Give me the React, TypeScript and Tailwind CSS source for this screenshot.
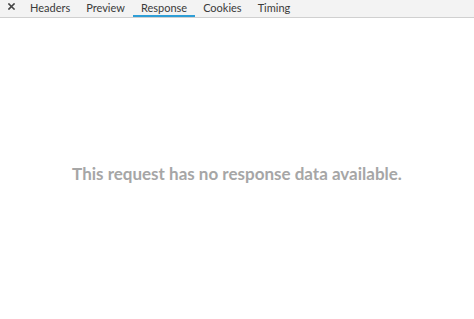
import React from "react";

const tabs = ["Headers", "Preview", "Response", "Cookies", "Timing"];

export default function App() {
  return (
    <div className="w-[474px] h-[319px] bg-white flex flex-col overflow-hidden" style={{ fontFamily: 'Lato, "Noto Sans", sans-serif' }}>
      <div className="h-[18px] bg-[#f3f3f3] border-b border-[#d0d0d0] flex items-stretch text-[11px] text-[#3a3a3a] leading-none">
        <div className="w-[22px] flex items-start justify-center pt-[3px] pl-[1px]">
          <svg width="7" height="7" viewBox="0 0 7 7">
            <path d="M1 1L6 6M6 1L1 6" stroke="#444" strokeWidth="1.6" strokeLinecap="square" />
          </svg>
        </div>
        {tabs.map((t) => (
          <div key={t} className="px-[8px] flex items-center relative">
            <span className="-mt-[2px]">{t}</span>
            {t === "Response" && (
              <div className="absolute left-0 right-0 bottom-0 h-[2px] bg-[#2e9ed6]" />
            )}
          </div>
        ))}
      </div>
      <div className="flex-1 flex items-center justify-center">
        <div className="text-[17px] font-bold text-[#a6a6a6] mt-[11px]">
          This request has no response data available.
        </div>
      </div>
    </div>
  );
}
